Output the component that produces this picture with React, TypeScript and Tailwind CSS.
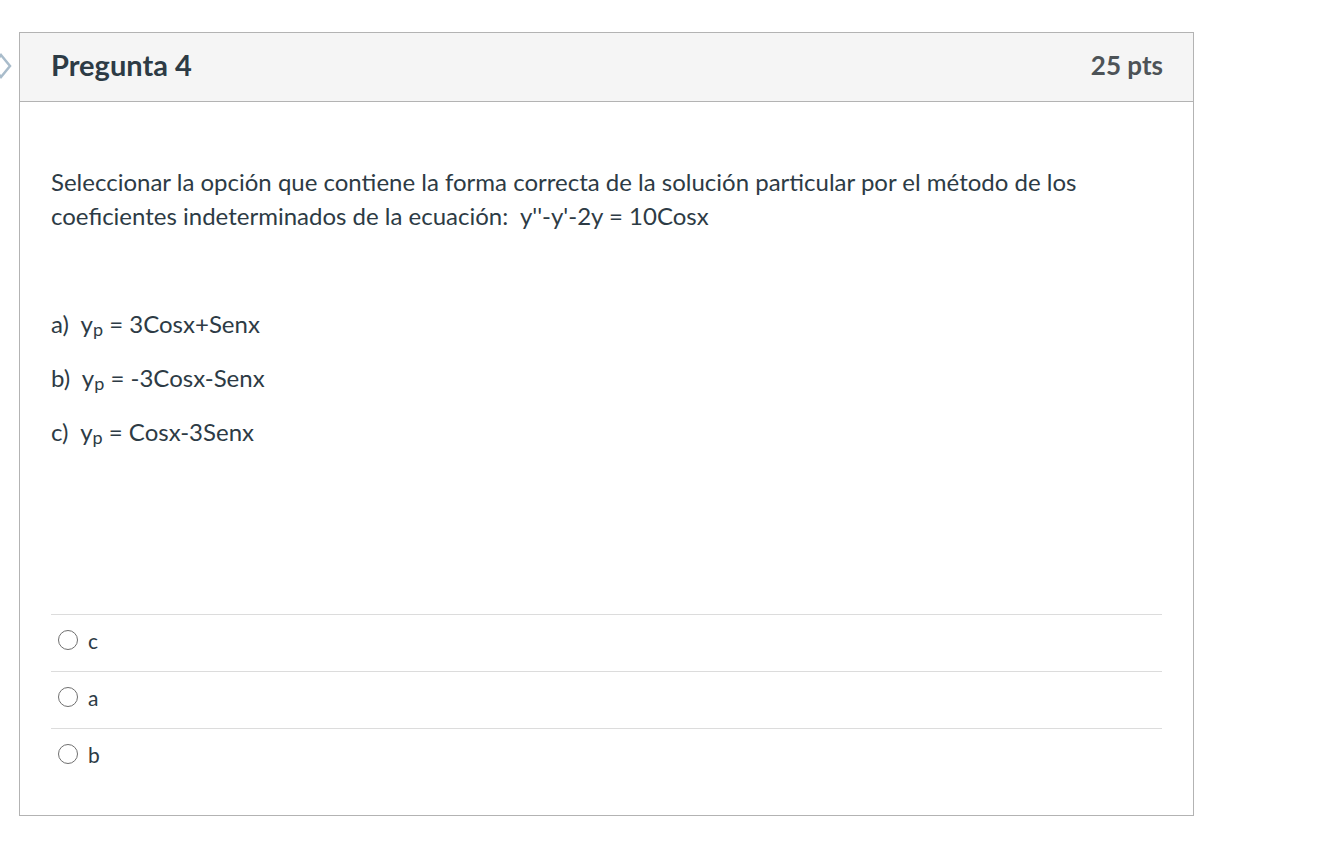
const OPTIONS = [
  { key: "a", expr: "3Cosx+Senx" },
  { key: "b", expr: "-3Cosx-Senx" },
  { key: "c", expr: "Cosx-3Senx" },
];

const ANSWERS = ["c", "a", "b"];

const App = () => {
  return (
    <div className="relative min-h-[844px] w-[1324px] bg-white pt-[32px] pl-[19px] font-['Lato','Noto_Sans',sans-serif] text-[#2d3b45]">
      {/* flecha de navegación, medio fuera de la pantalla */}
      <svg className="absolute left-[-11px] top-[53px]" width="24" height="26" viewBox="0 0 24 26">
        <path d="M12 2 L21 13 L12 24 L3 13 Z" fill="none" stroke="#a9bccb" strokeWidth="2.5" />
      </svg>

      <div className="w-[1175px] border border-[#b3b3b3]">
        <div className="flex h-[69px] items-center justify-between border-b border-[#b3b3b3] bg-[#f5f5f5] pb-[4px] pl-[31px] pr-[30px]">
          <h2 className="text-[29px] font-bold">Pregunta 4</h2>
          <span className="text-[26px] font-bold text-[#4d5357]">25 pts</span>
        </div>

        <div className="px-[31px] pt-[63px] pb-[30px]">
          <p className="text-[24px] leading-[34px]">
            Seleccionar la opción que contiene la forma correcta de la solución particular por el método de los coeficientes indeterminados de la ecuación:&nbsp; y''-y'-2y = 10Cosx
          </p>

          <div className="mt-[74px] flex flex-col gap-[20px]">
            {OPTIONS.map((o) => (
              <p key={o.key} className="text-[24px] leading-[34px]">
                {o.key})&nbsp; y<sub className="bottom-[-3px] text-[18px]">p</sub> = {o.expr}
              </p>
            ))}
          </div>

          <div className="mt-[165px]">
            {ANSWERS.map((a) => (
              <div key={a} className="flex h-[57px] items-center gap-[10px] border-t border-[#dcdcdc] pb-[6px] pl-[7px]">
                <span className="h-[20px] w-[20px] rounded-full border-[1.5px] border-[#6f6f6f] bg-white" />
                <span className="text-[21px] leading-none text-[#2d3b45]">{a}</span>
              </div>
            ))}
          </div>
        </div>
      </div>
    </div>
  );
};

export default App;
